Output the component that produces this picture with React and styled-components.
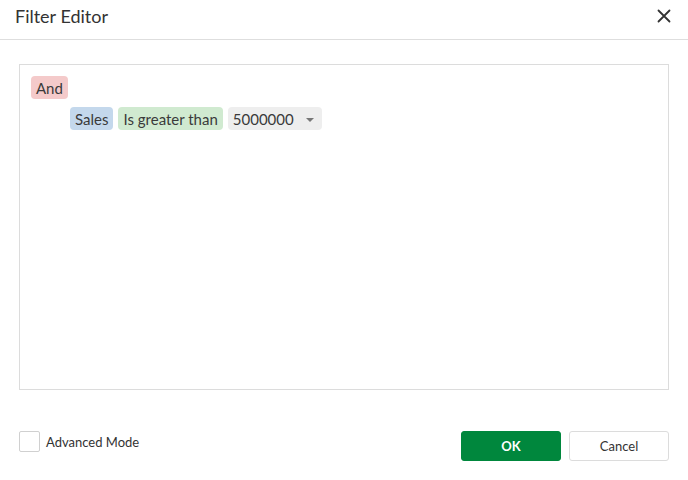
import styled, { createGlobalStyle } from "styled-components";

const GlobalStyle = createGlobalStyle`
  html, body {
    margin: 0;
    padding: 0;
    background: #fff;
  }
  body {
    font-family: "Lato", "Liberation Sans", sans-serif;
    color: #404040;
  }
`;

const COLORS = {
  group: "#f4caca",
  field: "#c4d8ec",
  operator: "#d0ead0",
  value: "#eeeeee",
};

export default function App() {
  return (
    <>
      <GlobalStyle />
      <Dialog>
        <Header>
          <Title>Filter Editor</Title>
          <CloseButton aria-label="Close">
            <svg width="14" height="14" viewBox="0 0 14 14">
              <path
                d="M1.5 1.5 L12.5 12.5 M12.5 1.5 L1.5 12.5"
                stroke="#333"
                strokeWidth="1.8"
                strokeLinecap="round"
              />
            </svg>
          </CloseButton>
        </Header>

        <Body>
          <EditorBox>
            <Chip $bg={COLORS.group}>And</Chip>
            <ConditionRow>
              <Chip $bg={COLORS.field}>Sales</Chip>
              <Chip $bg={COLORS.operator}>Is greater than</Chip>
              <ValueChip>
                5000000
                <Caret />
              </ValueChip>
            </ConditionRow>
          </EditorBox>
        </Body>

        <Footer>
          <CheckLabel>
            <CheckBox />
            Advanced Mode
          </CheckLabel>
          <Buttons>
            <Button $primary>OK</Button>
            <Button>Cancel</Button>
          </Buttons>
        </Footer>
      </Dialog>
    </>
  );
}

const Dialog = styled.div`
  width: 688px;
  height: 480px;
  display: flex;
  flex-direction: column;
`;

const Header = styled.div`
  height: 39px;
  display: flex;
  align-items: center;
  justify-content: space-between;
  padding: 0 17px 0 15px;
  border-bottom: 1px solid #dedede;
`;

const Title = styled.h1`
  margin: 0;
  font-size: 18px;
  font-weight: 400;
  color: #333;
  margin-top: -7px;
`;

const CloseButton = styled.button`
  border: none;
  background: none;
  padding: 0;
  display: flex;
  margin-top: -8px;
  cursor: pointer;
`;

const Body = styled.div`
  padding: 24px 19px 0;
`;

const EditorBox = styled.div`
  height: 302px;
  border: 1px solid #dcdcdc;
  padding: 11px;
  display: flex;
  flex-direction: column;
  align-items: flex-start;
  gap: 8px;
`;

const ConditionRow = styled.div`
  display: flex;
  gap: 5px;
  margin-left: 39px;
`;

const Chip = styled.span`
  display: inline-flex;
  align-items: center;
  height: 23px;
  padding: 0 5px;
  border-radius: 4px;
  background: ${(p) => p.$bg};
  font-size: 15px;
  color: #3a3a3a;
`;

const ValueChip = styled(Chip)`
  background: ${COLORS.value};
  width: 81px;
  justify-content: space-between;
  padding-right: 8px;
`;

const Caret = styled.span`
  width: 0;
  height: 0;
  border-left: 4px solid transparent;
  border-right: 4px solid transparent;
  border-top: 4px solid #777;
  margin-top: 2px;
`;

const Footer = styled.div`
  margin-top: 41px;
  padding: 0 19px;
  display: flex;
  align-items: flex-start;
  justify-content: space-between;
`;

const CheckLabel = styled.label`
  display: flex;
  align-items: center;
  gap: 6px;
  font-size: 13px;
  color: #333;
`;

const CheckBox = styled.span`
  width: 19px;
  height: 19px;
  border: 1px solid #d0d0d0;
  border-radius: 2px;
  background: #fff;
`;

const Buttons = styled.div`
  display: flex;
  gap: 8px;
`;

const Button = styled.button`
  width: 100px;
  height: 30px;
  border-radius: 3px;
  font-family: inherit;
  font-size: 13px;
  cursor: pointer;
  border: 1px solid ${(p) => (p.$primary ? "#00873d" : "#dcdcdc")};
  background: ${(p) => (p.$primary ? "#00873d" : "#fff")};
  color: ${(p) => (p.$primary ? "#fff" : "#333")};
  font-weight: ${(p) => (p.$primary ? 700 : 400)};
`;
